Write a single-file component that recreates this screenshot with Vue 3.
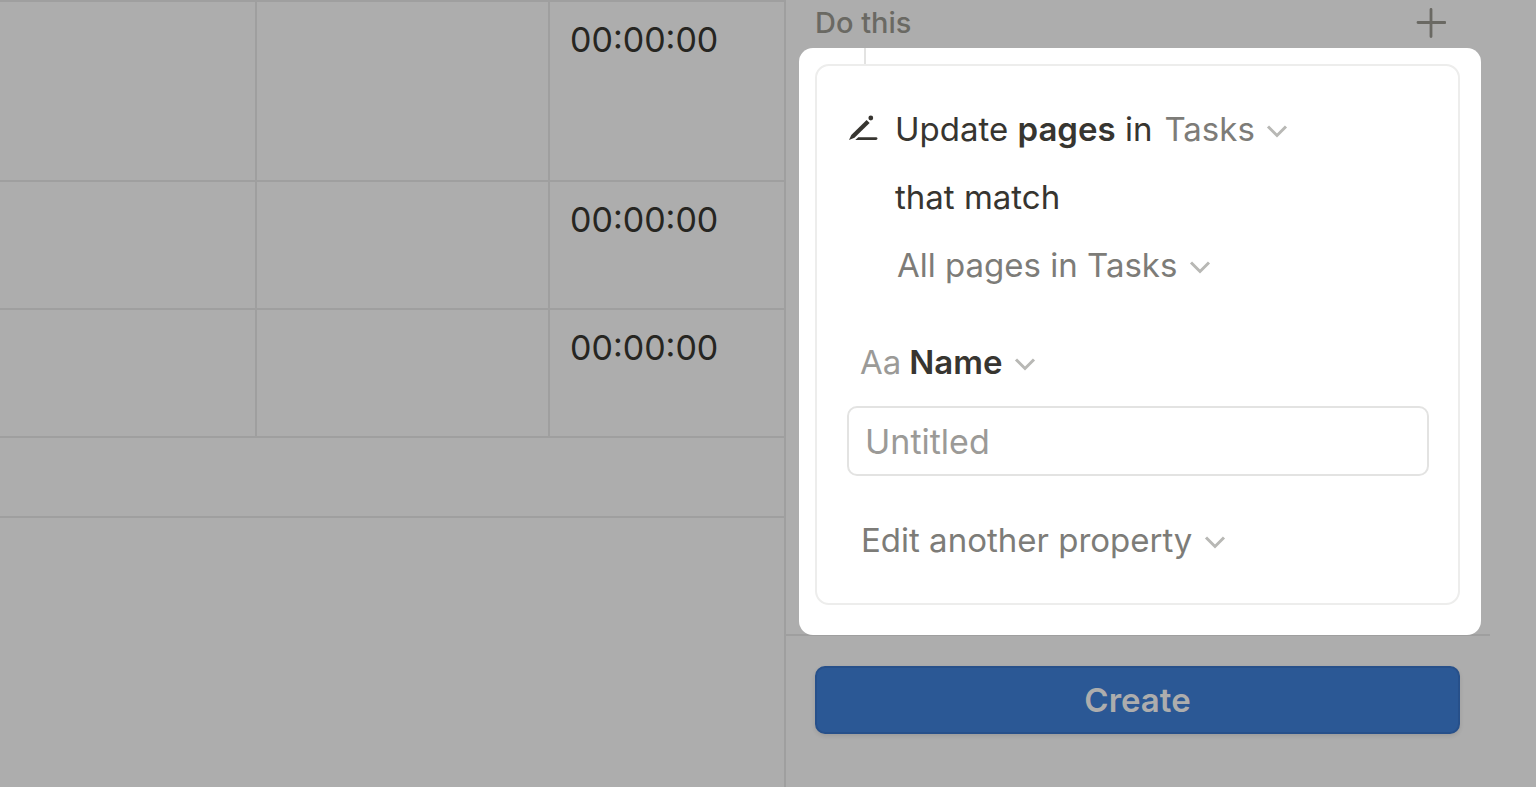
<script setup>
import { ref } from 'vue'

const rows = ref([
  { id: 1, time: '00:00:00', tall: true },
  { id: 2, time: '00:00:00', tall: false },
  { id: 3, time: '00:00:00', tall: false },
])
const name = ref('')
</script>

<template>
  <div class="page">
    <main class="board">
      <table class="grid">
        <colgroup>
          <col class="col-a" />
          <col class="col-b" />
          <col class="col-c" />
        </colgroup>
        <tbody>
          <tr v-for="row in rows" :key="row.id" :class="{ tall: row.tall }">
            <td></td>
            <td></td>
            <td>{{ row.time }}</td>
          </tr>
        </tbody>
      </table>
      <div class="grid-footer"></div>
    </main>

    <aside class="panel">
      <header class="panel-head">
        <h2>Do this</h2>
        <button class="add" type="button" aria-label="Add action">
          <svg width="30" height="30" viewBox="0 0 30 30" fill="none" stroke="currentColor" stroke-width="2.8" stroke-linecap="round">
            <path d="M15 1.500v27M2 14.500h27" />
          </svg>
        </button>
      </header>

      <section class="spotlight">
        <div class="connector"></div>
        <div class="card">
          <div class="line">
            <svg class="pen" width="30" height="26" viewBox="0 0 30 26">
              <path d="M0 25 L2.300 19.900 L17.600 5.100 L20.600 8.100 L5.500 22.700 Z" fill="currentColor" />
              <circle cx="21.800" cy="3" r="2.400" fill="currentColor" />
              <path d="M9.300 22.200H27a1.400 1.400 0 0 1 0 2.800H6.300z" fill="currentColor" />
            </svg>
            <span class="sentence">Update <b>pages</b> in</span>
            <span class="pick">
              <select aria-label="Database"><option>Tasks</option></select>
              <svg class="chevron" width="22" height="14" viewBox="0 0 22 14"><path d="M2 2.500l9 9 9-9" /></svg>
            </span>
          </div>
          <div class="line indent">that match</div>
          <div class="line indent">
            <span class="pick filter">
              <select aria-label="Filter"><option>All pages in Tasks</option></select>
              <svg class="chevron" width="22" height="14" viewBox="0 0 22 14"><path d="M2 2.500l9 9 9-9" /></svg>
            </span>
          </div>

          <div class="line property">
            <span class="type">Aa</span>
            <span class="pick strong">
              <select aria-label="Property"><option>Name</option></select>
              <svg class="chevron" width="22" height="14" viewBox="0 0 22 14"><path d="M2 2.500l9 9 9-9" /></svg>
            </span>
          </div>
          <input v-model="name" class="field" type="text" placeholder="Untitled" aria-label="Name" />

          <div class="line another">
            <span class="pick">
              <select aria-label="Edit another property"><option>Edit another property</option></select>
              <svg class="chevron" width="22" height="14" viewBox="0 0 22 14"><path d="M2 2.500l9 9 9-9" /></svg>
            </span>
          </div>
        </div>
      </section>

      <footer class="panel-foot">
        <button class="create" type="button">Create</button>
      </footer>
    </aside>
  </div>
</template>

<style>
body {
  background: #adadad;
}
</style>

<style scoped>
.page {
  --rule: #9f9f9f;
  display: flex;
  min-height: 100vh;
  background: #adadad;
  color: #373530;
  font-family: Inter, "Liberation Sans", sans-serif;
  font-size: 33px;
  line-height: 44px;
}
.page * {
  box-sizing: border-box;
}
.board {
  flex: 1;
  min-width: 0;
}
.grid {
  width: 100%;
  table-layout: fixed;
  border-collapse: separate;
  border-spacing: 0;
  border-top: 2px solid var(--rule);
  font-size: 34px;
}
.col-b {
  width: 293px;
}
.col-c {
  width: 234px;
}
.grid tr {
  height: 128px;
}
.grid tr.tall {
  height: 180px;
}
.grid td {
  padding: 16px 0 0 20px;
  vertical-align: top;
  border-bottom: 2px solid var(--rule);
  border-right: 2px solid var(--rule);
  color: #262521;
}
.grid td:last-child {
  border-right: 0;
}
.grid-footer {
  height: 80px;
  border-bottom: 2px solid var(--rule);
}
.panel {
  display: flex;
  flex-direction: column;
  width: 752px;
  padding-right: 46px;
  border-left: 2px solid var(--rule);
}
.panel-head {
  display: flex;
  align-items: center;
  justify-content: space-between;
  height: 48px;
  padding: 0 44px 2px 29px;
  color: #6a6963;
}
.panel-head h2 {
  margin: 0;
  font-size: 29px;
  font-weight: 500;
  line-height: 44px;
}
button {
  padding: 0;
  border: 0;
  font: inherit;
}
.add {
  display: flex;
  background: none;
  color: #6a6963;
}
.spotlight {
  position: relative;
  margin: 0 9px -1px 13px;
  padding: 0 21px 30px 16px;
  border-radius: 14px;
  background: #fff;
}
.connector {
  width: 2px;
  height: 16px;
  margin-left: 49px;
  background: #e3e3e2;
}
.card {
  padding: 29px 29px 29px 30px;
  border: 2px solid #ededec;
  border-radius: 14px;
}
.line {
  display: flex;
  align-items: center;
  height: 68px;
  white-space: nowrap;
}
.indent {
  padding-left: 48px;
}
.pen {
  margin: 0 16px 2px 2px;
}
.pick {
  display: inline-grid;
  align-items: center;
  margin-left: 12px;
  color: #7d7c78;
}
.filter {
  margin-left: 2px;
}
.pick select,
.pick .chevron {
  grid-area: 1 / 1;
}
.pick select {
  appearance: none;
  margin: 0;
  padding: 0 33px 0 0;
  border: 0;
  background: none;
  color: inherit;
  font: inherit;
}
.chevron {
  justify-self: end;
  margin-top: 4px;
  pointer-events: none;
  fill: none;
  stroke: #b8b8b5;
  stroke-width: 3;
}
b {
  font-weight: 600;
}
.property {
  margin-top: 29px;
  padding-left: 13px;
}
.type {
  color: #9b9a97;
}
.strong {
  margin-left: 8px;
  color: #373530;
  font-weight: 600;
}
.field {
  display: block;
  width: 100%;
  height: 70px;
  margin: 10px 0 30px;
  padding: 0 16px;
  border: 2px solid #e3e3e2;
  border-radius: 10px;
  background: #fff;
  color: inherit;
  font: inherit;
  font-size: 34px;
}
.field::placeholder {
  color: #9b9a97;
  opacity: 1;
}
.another .pick {
  margin-left: 14px;
}
.panel-foot {
  padding: 30px 30px 53px 29px;
  border-top: 2px solid var(--rule);
}
.create {
  display: block;
  width: 100%;
  height: 68px;
  border: 2px solid #27508a;
  border-radius: 10px;
  background: #2b5895;
  box-shadow: 0 2px 4px rgba(0, 0, 0, 0.1);
  color: #adadad;
  font-weight: 600;
}
</style>
